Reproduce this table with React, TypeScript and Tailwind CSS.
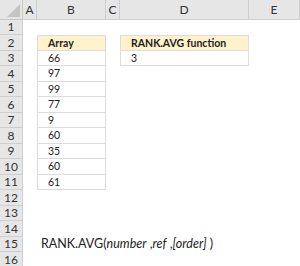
const cols = ["A", "B", "C", "D", "E"];
const arr = [66, 97, 99, 77, 9, 60, 35, 60, 61];

function Cell({
  children,
  row,
  col,
  className = "",
}: {
  children?: React.ReactNode;
  row: number;
  col: number;
  className?: string;
}) {
  return (
    <div
      className={`flex items-center min-h-0 overflow-hidden pl-[10px] text-[10.5px] leading-none text-[#222] border-x border-b border-[#dcdcdc] whitespace-nowrap ${className}`}
      style={{ gridRow: row + 1, gridColumn: col + 1 }}
    >
      {children}
    </div>
  );
}

export default function App() {
  const rows = Array.from({ length: 16 }, (_, i) => i + 1);
  return (
    <div
      className="w-[300px] h-[266px] overflow-hidden bg-white grid grid-cols-[23px_14px_69px_14px_129px_51px] grid-rows-[20px_repeat(8,15px_16px)]"
      style={{ fontFamily: "Lato, 'Liberation Sans', sans-serif" }}
    >
      {/* corner */}
      <div className="relative bg-[#e6e6e6] border-r border-b border-[#c8c8c8]">
        <div className="absolute right-[2px] bottom-[2px] w-0 h-0 border-l-[13px] border-l-transparent border-b-[13px] border-b-[#c4c4c4]" />
      </div>
      {cols.map((c) => (
        <div
          key={c}
          className="flex items-center justify-center bg-[#e6e6e6] border-r border-b border-[#cfcfcf] text-[12px] leading-none text-[#333]"
        >
          {c}
        </div>
      ))}

      {rows.map((r) => (
        <div
          key={r}
          className="flex items-center justify-center min-h-0 overflow-hidden bg-[#e6e6e6] border-r border-b border-[#cfcfcf] text-[12px] leading-none text-[#333]"
          style={{ gridRow: r + 1, gridColumn: 1 }}
        >
          {r}
        </div>
      ))}

      {/* Array table */}
      <Cell row={2} col={2} className="bg-[#fff2cc] font-bold border-t">
        Array
      </Cell>
      {arr.map((v, i) => (
        <Cell key={i} row={i + 3} col={2}>
          {v}
        </Cell>
      ))}

      {/* RANK.AVG table */}
      <Cell row={2} col={4} className="bg-[#fff2cc] font-bold border-t">
        RANK.AVG function
      </Cell>
      <Cell row={3} col={4}>
        3
      </Cell>

      {/* syntax */}
      <div className="col-start-3 col-span-4 row-start-16 min-h-0 flex items-center pl-[4px] text-[12.5px] leading-none text-[#222] whitespace-nowrap">
        RANK.AVG(<i>number</i>&nbsp;,<i>ref</i>&nbsp;,<i>[order]</i>&nbsp;)
      </div>
    </div>
  );
}
